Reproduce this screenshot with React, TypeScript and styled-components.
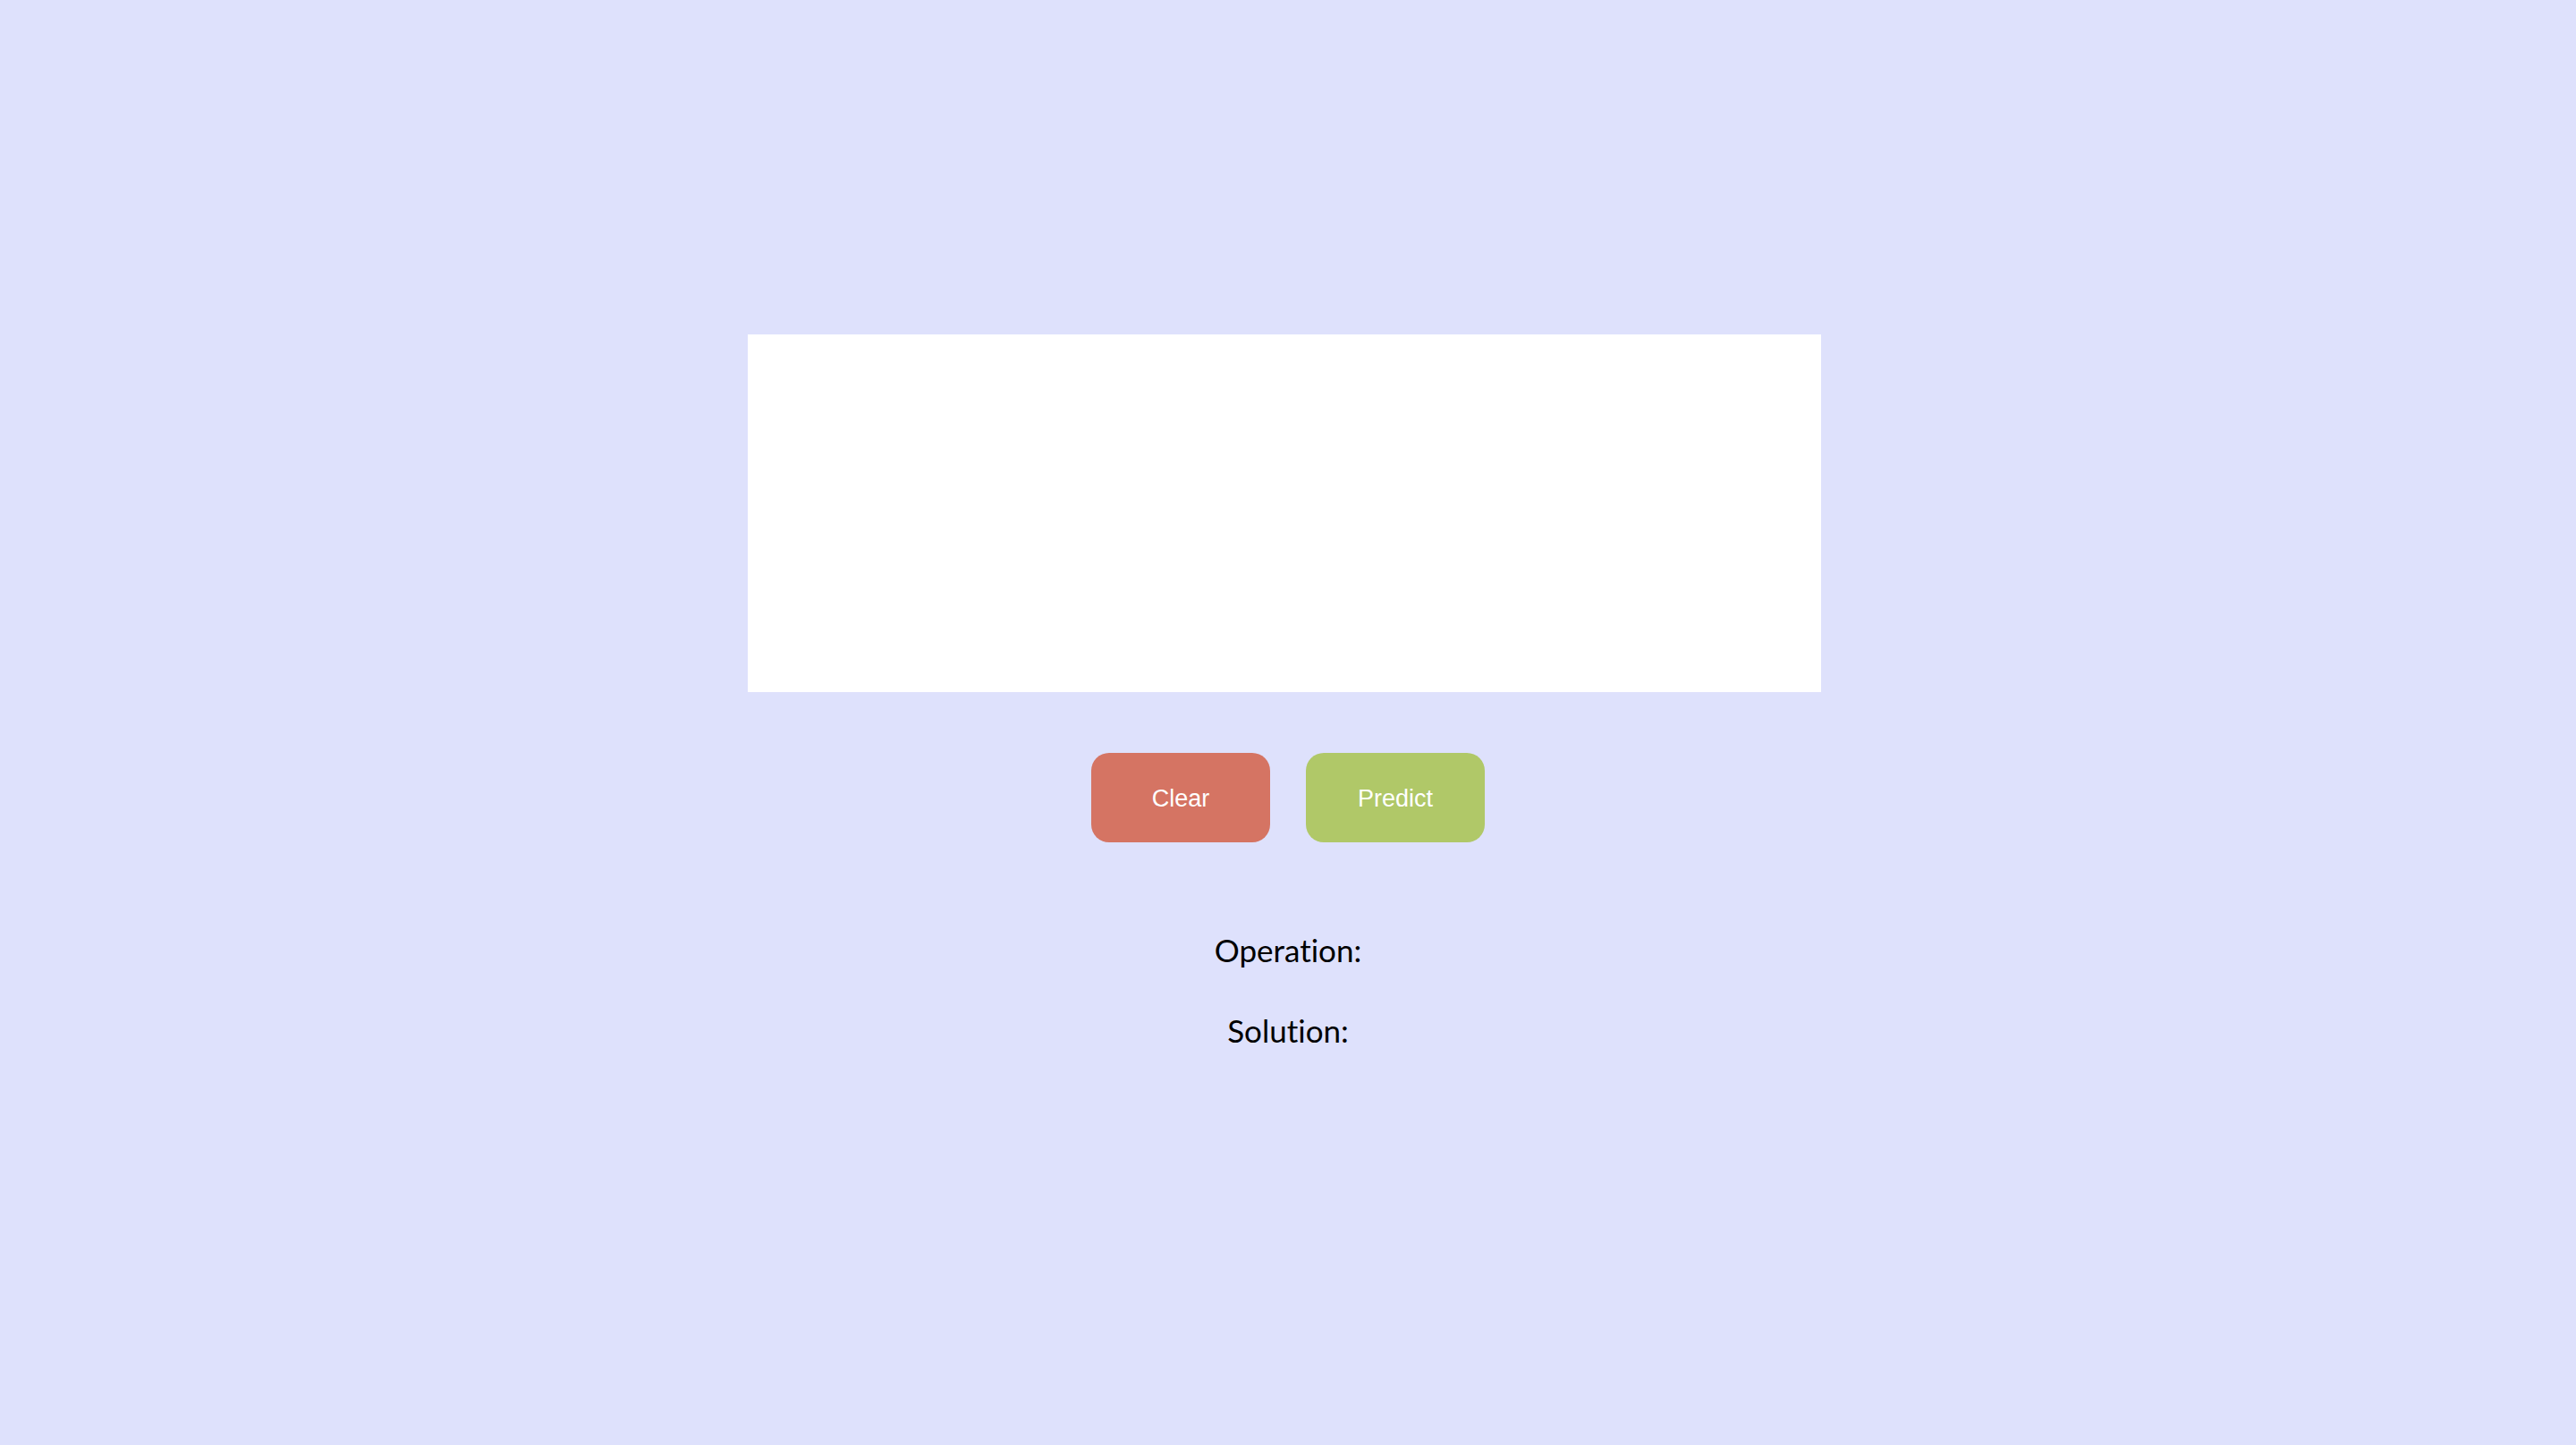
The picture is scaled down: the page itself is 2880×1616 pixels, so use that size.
import React from "react";
import styled, { createGlobalStyle } from "styled-components";

const Global = createGlobalStyle`
  html, body { margin: 0; padding: 0; background: #dee1fc; }
  body { font-family: "Lato", "Liberation Sans", sans-serif; }
`;

const Page = styled.main`
  min-height: 1616px;
  box-sizing: border-box;
  padding-top: 374px;
  display: flex;
  flex-direction: column;
  align-items: center;
`;

const Canvas = styled.canvas`
  display: block;
  width: 1200px;
  height: 400px;
  background: #ffffff;
  margin-right: 8px;
`;

const ButtonRow = styled.div`
  display: flex;
  gap: 40px;
  margin-top: 68px;
`;

const ActionButton = styled.button<{ $bg: string }>`
  width: 200px;
  height: 100px;
  border: none;
  border-radius: 20px;
  background: ${(p) => p.$bg};
  color: #ffffff;
  font-family: "Liberation Sans", Arial, sans-serif;
  font-size: 27px;
  padding: 2px 0 0;
  cursor: pointer;
`;

const Result = styled.p`
  margin: 0;
  font-family: "Lato", sans-serif;
  font-size: 35px;
  font-variant-ligatures: none;
  line-height: 90px;
  color: #000000;
  text-align: center;
`;

const Results = styled.div`
  margin-top: 75px;
  display: flex;
  flex-direction: column;
  align-items: center;
`;

export default function App() {
  return (
    <>
      <Global />
      <Page>
        <Canvas width={1200} height={400} />
        <ButtonRow>
          <ActionButton $bg="#d57463">Clear</ActionButton>
          <ActionButton $bg="#b0c868">Predict</ActionButton>
        </ButtonRow>
        <Results>
          <Result>Operation:</Result>
          <Result>Solution:</Result>
        </Results>
      </Page>
    </>
  );
}
